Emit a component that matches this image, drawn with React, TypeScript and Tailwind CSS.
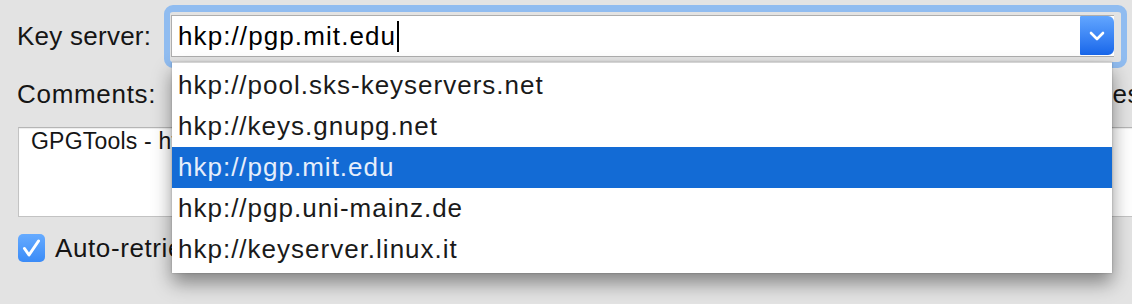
import React from "react";

const servers = [
  "hkp://pool.sks-keyservers.net",
  "hkp://keys.gnupg.net",
  "hkp://pgp.mit.edu",
  "hkp://pgp.uni-mainz.de",
  "hkp://keyserver.linux.it",
];

export default function App() {
  return (
    <div
      className="relative w-[1132px] h-[304px] overflow-hidden bg-[#e3e3e3] pt-[5px] text-[26px] text-[#151515]"
      style={{ fontFamily: '"Liberation Sans", Arial, sans-serif' }}
    >
      {/* Row 1: key server combo box */}
      <div className="flex items-start">
        <div className="w-[164px] pl-[17px] mt-[16px] leading-[30px] tracking-[0.25px] whitespace-nowrap">
          Key server:
        </div>
        <div className="relative z-10">
          <div className="w-[963px] h-[63px] rounded-[9px] border-[6px] border-t-[7px] border-[#90bcf0] bg-[#e3e3e3] pl-[1px] pt-[3px] pr-[7px]">
            <div className="flex h-[42px] bg-white border-l border-t border-b border-[#aeaeae]">
              <div className="flex-1 flex items-center pl-[6px]">
                <span className="leading-[30px] tracking-[1.1px] text-black whitespace-nowrap">
                  hkp://pgp.mit.edu
                </span>
                <span className="ml-[1px] w-[2px] h-[31px] bg-black" />
              </div>
              <div className="w-[34px] h-[39px] rounded-r-[6px] rounded-l-[1px] bg-gradient-to-b from-[#62a6ff] to-[#1766ea] flex items-center justify-center">
                <svg width="16" height="10" viewBox="0 0 16 10">
                  <path
                    d="M2 2 L8 8 L14 2"
                    fill="none"
                    stroke="white"
                    strokeWidth="2.6"
                    strokeLinecap="round"
                    strokeLinejoin="round"
                  />
                </svg>
              </div>
            </div>
          </div>

          {/* Dropdown menu */}
          <div className="absolute left-[8px] top-[57px] w-[940px] bg-white pt-[2px] pb-[3px] border-t border-[#d4d4d4] shadow-[0_10px_18px_rgba(0,0,0,0.42),0_0_2px_rgba(0,0,0,0.25)]">
            {servers.map((s) => {
              const active = s === "hkp://pgp.mit.edu";
              return (
                <div
                  key={s}
                  className={
                    active
                      ? "h-[41px] leading-[41px] pl-[6px] tracking-[1px] bg-[#136bd5] text-[#e6eefb] whitespace-nowrap"
                      : "h-[41px] leading-[41px] pl-[6px] tracking-[1px] text-[#1a1a1a] whitespace-nowrap"
                  }
                >
                  {s}
                </div>
              );
            })}
          </div>
        </div>
      </div>

      {/* Row 2: comments label */}
      <div className="flex w-[1141px] mt-[11px] leading-[30px] whitespace-nowrap">
        <span className="pl-[17px] tracking-[0.7px]">Comments:</span>
        <span className="ml-auto tracking-[0.5px]">es</span>
      </div>

      {/* Comments text area */}
      <div className="ml-[18px] mt-[18px] w-[1130px] h-[90px] bg-white border border-[#c3c3c3] border-t-[#b5b5b5] shadow-[inset_0_1px_1px_rgba(0,0,0,0.08)] pl-[12px] text-[23px] leading-[26px] tracking-[0.2px] whitespace-nowrap">
        GPGTools - https://gpgtools.org
      </div>

      {/* Row 3: checkbox */}
      <div className="flex items-start ml-[18px] mt-[16px]">
        <div className="mt-[1px] w-[27px] h-[28px] rounded-[5px] bg-gradient-to-b from-[#66abff] to-[#3a8bf7] flex items-center justify-center">
          <svg width="27" height="28" viewBox="0 0 27 28">
            <path
              d="M6.5 14.5 L11 21 L20.5 7"
              fill="none"
              stroke="white"
              strokeWidth="3"
              strokeLinecap="round"
              strokeLinejoin="round"
            />
          </svg>
        </div>
        <span className="ml-[10px] leading-[30px] tracking-[0.6px] whitespace-nowrap">
          Auto-retrieve keys using key server
        </span>
      </div>
    </div>
  );
}
